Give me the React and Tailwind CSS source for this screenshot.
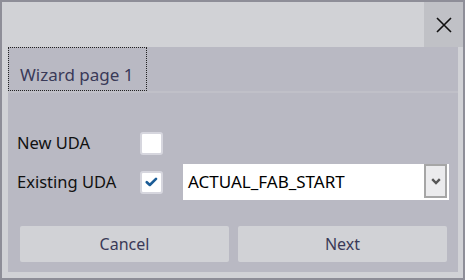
import { useState } from "react";

// Small wizard dialog: page tab, two UDA choices and the nav buttons
const font = { fontFamily: '"Noto Sans", "Open Sans", sans-serif' };

function Checkbox({ checked, onToggle }) {
  return (
    <button
      type="button"
      onClick={onToggle}
      className="w-[23px] h-[23px] rounded-[3px] border-2 border-[#d6d6de] bg-white flex items-center justify-center"
    >
      {checked && (
        <svg width="13" height="10" viewBox="0 0 13 10">
          <path d="M1.8 5.2 L4.8 8 L11 1.8" fill="none" stroke="#1b5c96" strokeWidth="2.6" strokeLinecap="round" strokeLinejoin="round" />
        </svg>
      )}
    </button>
  );
}

export default function App() {
  const [newUda, setNewUda] = useState(false);
  const [existingUda, setExistingUda] = useState(true);

  return (
    <div
      style={font}
      className="w-[465px] h-[280px] border-2 border-[#8e8e98] bg-[#d1d2d6] flex flex-col"
    >
      {/* Title bar */}
      <div className="h-[45px] flex justify-end">
        <button type="button" className="w-[39px] h-full bg-[#c0c1c6] flex items-center justify-center">
          <svg width="18" height="18" viewBox="0 0 18 18">
            <path d="M2 2 L16 16 M16 2 L2 16" stroke="#111" strokeWidth="1.6" />
          </svg>
        </button>
      </div>

      <div className="flex-1 pl-[6px] pr-[5px] pb-[6px] flex">
        <div className="flex-1 bg-[#b9b9c3] flex flex-col">
          {/* Tab header */}
          <div className="h-[46px] border-b-2 border-[#c0c0c8] flex">
            <div className="w-[139px] h-[44px] border border-dotted border-[#222] flex items-center pl-[11px] pt-[12px] text-[17px] text-[#3a3a58]">
              Wizard page 1
            </div>
          </div>

          {/* Choices */}
          <div className="mt-[38px] h-[24px] flex items-center">
            <span className="w-[132px] pl-[9px] text-[16.5px] text-[#111]">New UDA</span>
            <Checkbox checked={newUda} onToggle={() => setNewUda(!newUda)} />
          </div>

          <div className="mt-[9px] h-[36px] flex items-center">
            <span className="w-[132px] pl-[9px] text-[16.5px] text-[#111]">Existing UDA</span>
            <Checkbox checked={existingUda} onToggle={() => setExistingUda(!existingUda)} />
            <div className="ml-[20px] w-[266px] h-[36px] bg-white flex items-center justify-between pl-[5px] pr-[2px]">
              <span className="text-[17px] text-black">ACTUAL_FAB_START</span>
              <div className="w-[23px] h-[34px] self-start border-2 border-[#a6a6a6] bg-[#ebebed] flex items-center justify-center">
                <svg width="10" height="7" viewBox="0 0 10 7">
                  <path d="M1.2 1.2 L5 5 L8.8 1.2" fill="none" stroke="#555" strokeWidth="2.4" />
                </svg>
              </div>
            </div>
          </div>

          {/* Buttons */}
          <div className="mt-[26px] pl-[12px] pr-[11px] grid grid-cols-2 gap-[9px]">
            <button type="button" className="h-[36px] rounded-[2px] bg-[#d1d2d6] text-[16px] text-[#3a3a58]">
              Cancel
            </button>
            <button type="button" className="h-[36px] rounded-[2px] bg-[#d1d2d6] text-[16px] text-[#3a3a58]">
              Next
            </button>
          </div>
        </div>
      </div>
    </div>
  );
}
